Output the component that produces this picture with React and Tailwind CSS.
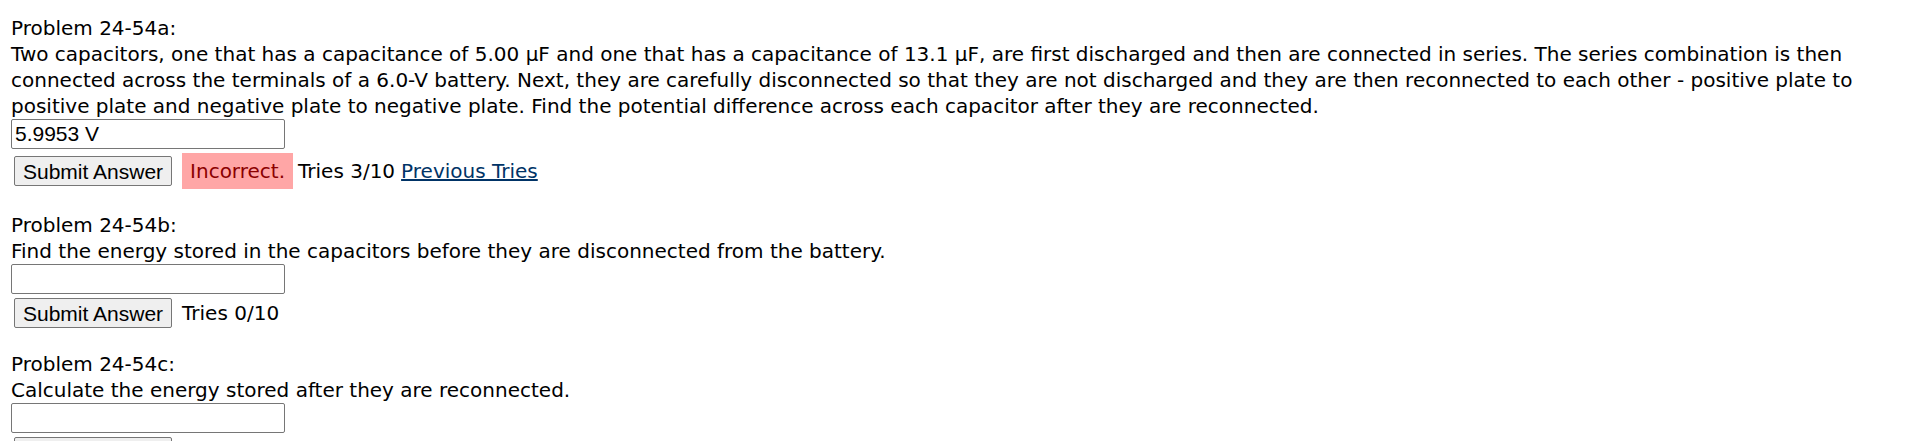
import { useState } from 'react';

const problems = [
  {
    id: '24-54a',
    text: 'Two capacitors, one that has a capacitance of 5.00 µF and one that has a capacitance of 13.1 µF, are first discharged and then are connected in series. The series combination is then connected across the terminals of a 6.0-V battery. Next, they are carefully disconnected so that they are not discharged and they are then reconnected to each other - positive plate to positive plate and negative plate to negative plate. Find the potential difference across each capacitor after they are reconnected.',
    answer: '5.9953 V',
    incorrect: true,
    tries: 3,
  },
  {
    id: '24-54b',
    text: 'Find the energy stored in the capacitors before they are disconnected from the battery.',
    answer: '',
    incorrect: false,
    tries: 0,
  },
  {
    id: '24-54c',
    text: 'Calculate the energy stored after they are reconnected.',
    answer: '',
    incorrect: false,
    tries: 0,
  },
];

function Problem({ p }) {
  const [value, setValue] = useState(p.answer);
  return (
    <div className="mb-[23px]">
      <div>Problem {p.id}:</div>
      <div>{p.text}</div>
      <input
        type="text"
        value={value}
        onChange={(e) => setValue(e.target.value)}
        className="block w-[274px] h-[30px] border border-[#767676] rounded-[2px] px-[3px] bg-white text-black text-[21px] leading-none outline-none font-['Liberation_Sans',Arial,sans-serif]"
      />
      <div className="flex items-center mt-[4px]">
        <button className="ml-[3px] h-[30px] px-[8px] border border-[#767676] rounded-[2px] bg-[#efefef] text-black text-[21px] leading-none font-['Liberation_Sans',Arial,sans-serif]">
          Submit Answer
        </button>
        {p.incorrect && (
          <span className="ml-[10px] bg-[#ffa6a6] text-[#8b0000] px-[8px] py-[5px]">Incorrect.</span>
        )}
        <span className={p.incorrect ? 'ml-[5px]' : 'ml-[10px]'}>Tries {p.tries}/10</span>
        {p.incorrect && (
          <a href="#" className="ml-[6px] text-[#003366] underline">Previous Tries</a>
        )}
      </div>
    </div>
  );
}

export default function App() {
  return (
    <div className="min-h-screen bg-white text-black px-[11px] pt-[15px] text-[20px] leading-[26px] font-['DejaVu_Sans',Verdana,sans-serif]">
      {problems.map((p) => (
        <Problem key={p.id} p={p} />
      ))}
    </div>
  );
}
